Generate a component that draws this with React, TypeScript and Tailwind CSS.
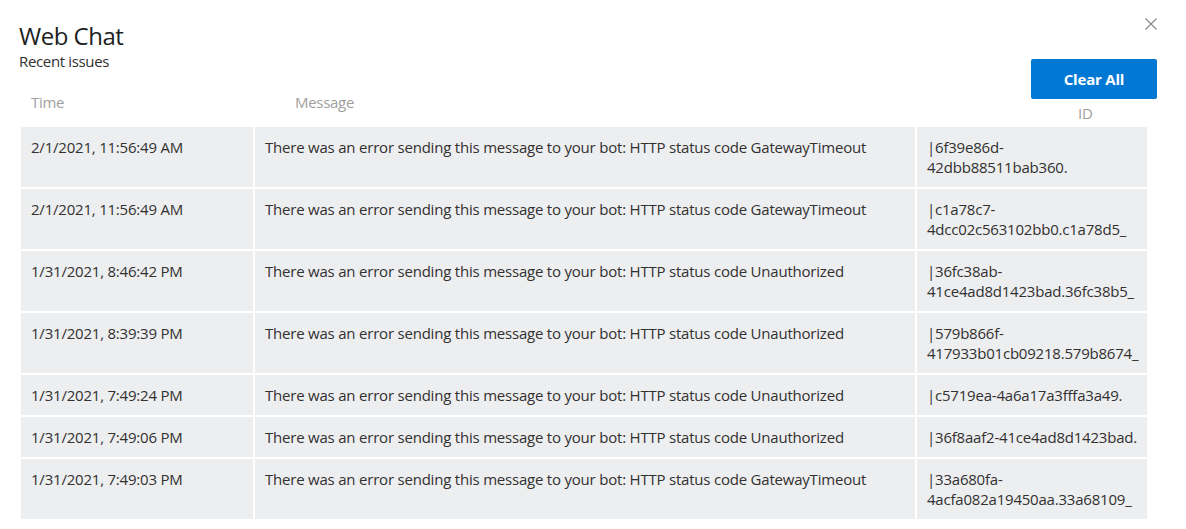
import React from "react";

type Issue = { time: string; message: string; id: string[] };

const issues: Issue[] = [
  {
    time: "2/1/2021, 11:56:49 AM",
    message: "There was an error sending this message to your bot: HTTP status code GatewayTimeout",
    id: ["|6f39e86d-", "42dbb88511bab360."],
  },
  {
    time: "2/1/2021, 11:56:49 AM",
    message: "There was an error sending this message to your bot: HTTP status code GatewayTimeout",
    id: ["|c1a78c7-", "4dcc02c563102bb0.c1a78d5_"],
  },
  {
    time: "1/31/2021, 8:46:42 PM",
    message: "There was an error sending this message to your bot: HTTP status code Unauthorized",
    id: ["|36fc38ab-", "41ce4ad8d1423bad.36fc38b5_"],
  },
  {
    time: "1/31/2021, 8:39:39 PM",
    message: "There was an error sending this message to your bot: HTTP status code Unauthorized",
    id: ["|579b866f-", "417933b01cb09218.579b8674_"],
  },
  {
    time: "1/31/2021, 7:49:24 PM",
    message: "There was an error sending this message to your bot: HTTP status code Unauthorized",
    id: ["|c5719ea-4a6a17a3fffa3a49."],
  },
  {
    time: "1/31/2021, 7:49:06 PM",
    message: "There was an error sending this message to your bot: HTTP status code Unauthorized",
    id: ["|36f8aaf2-41ce4ad8d1423bad."],
  },
  {
    time: "1/31/2021, 7:49:03 PM",
    message: "There was an error sending this message to your bot: HTTP status code GatewayTimeout",
    id: ["|33a680fa-", "4acfa082a19450aa.33a68109_"],
  },
];

export default function App() {
  return (
    <div
      className="w-[1186px] h-[529px] overflow-hidden bg-white text-[#323130] pl-[19px] pr-[29px]"
      style={{ fontFamily: '"Open Sans", "Noto Sans", sans-serif' }}
    >
      {/* header */}
      <div className="flex justify-between items-start">
        <div className="pt-[20px]">
          <h1 className="text-[24px] leading-[32px] font-normal text-[#201f1e] tracking-[-0.5px]">Web Chat</h1>
          <p className="-mt-[1px] text-[15px] leading-[20px] tracking-[-0.35px]">Recent issues</p>
          <div className="mt-[21px] flex text-[15px] leading-[20px] text-[#a19f9d] tracking-[-0.3px]">
            <span className="w-[264px] pl-[12px]">Time</span>
            <span className="pl-[12px]">Message</span>
          </div>
        </div>
        <div className="flex flex-col items-end pt-[18px]">
          <button className="w-[12px] h-[12px] text-[#8a8886]" aria-label="Close">
            <svg viewBox="0 0 12 12" className="w-[12px] h-[12px]" fill="none" stroke="currentColor" strokeWidth="1.1">
              <path d="M0.5 0.5 L11.5 11.5 M11.5 0.5 L0.5 11.5" />
            </svg>
          </button>
          <button className="mt-[29px] w-[126px] h-[40px] rounded-[2px] bg-[#0078d4] text-white text-[15px] font-bold tracking-[-0.2px]">
            Clear All
          </button>
          <span className="mt-[4px] mr-[64px] text-[15px] leading-[20px] text-[#a19f9d]">ID</span>
        </div>
      </div>

      {/* table */}
      <table className="mt-[2px] table-fixed border-separate border-spacing-[2px] w-[1130px] text-[15px] leading-[20px] tracking-[-0.21px]">
        <colgroup>
          <col className="w-[232px]" />
          <col className="w-[660px]" />
          <col className="w-[230px]" />
        </colgroup>
        <tbody>
          {issues.map((it, i) => (
            <tr key={i}>
              <td className="bg-[#edeef0] align-top px-[10px] py-[10px] whitespace-nowrap">{it.time}</td>
              <td className="bg-[#edeef0] align-top px-[10px] py-[10px] whitespace-nowrap">{it.message}</td>
              <td className="bg-[#edeef0] align-top px-[10px] py-[10px] whitespace-nowrap">
                {it.id.map((l, j) => (
                  <div key={j}>{l}</div>
                ))}
              </td>
            </tr>
          ))}
        </tbody>
      </table>
    </div>
  );
}
